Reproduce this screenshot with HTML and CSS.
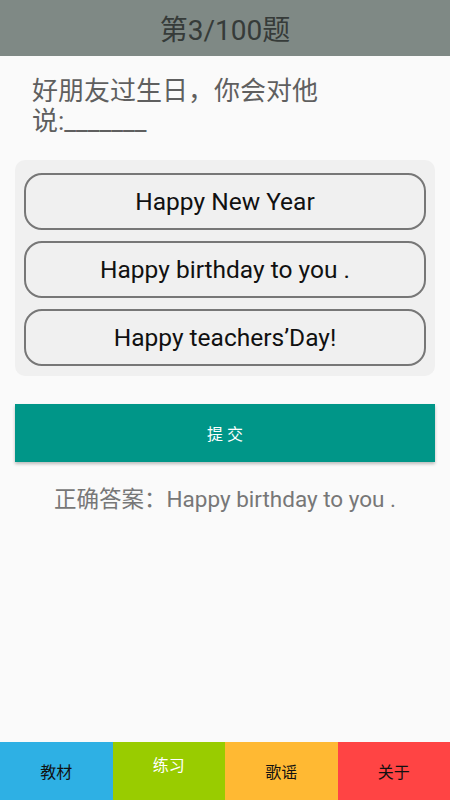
FILE: index.html
```html
<!DOCTYPE html>
<html lang="zh">
<head>
<meta charset="utf-8">
<link rel="stylesheet" href="styles.css">
</head>
<body>
<div class="app">
  <header class="topbar">第3/100题</header>
  <main class="content">
    <p class="question">好朋友过生日，你会对他说:_______</p>
    <div class="options">
      <div class="option">Happy New Year</div>
      <div class="option">Happy birthday to you .</div>
      <div class="option">Happy teachers’Day!</div>
    </div>
    <div class="submit">提 交</div>
    <p class="answer">正确答案：Happy birthday to you .</p>
  </main>
  <nav class="tabs">
    <div class="tab tab-blue">教材</div>
    <div class="tab tab-green">练习</div>
    <div class="tab tab-orange">歌谣</div>
    <div class="tab tab-red">关于</div>
  </nav>
</div>
</body>
</html>
```
FILE: styles.css
```css
html, body {
  margin: 0;
  padding: 0;
  background: #fafafa;
}
body {
  font-family: Roboto, "Noto Sans CJK SC", sans-serif;
}
.app {
  width: 450px;
  height: 800px;
  display: flex;
  flex-direction: column;
}
.topbar {
  height: 56px;
  background: #7f8985;
  color: #363b39;
  font-size: 28px;
  display: flex;
  align-items: center;
  justify-content: center;
}
.content {
  flex: 1;
  display: flex;
  flex-direction: column;
}
.question {
  margin: 20px 0 0 32px;
  width: 300px;
  font-size: 26px;
  line-height: 30px;
  color: #5f5f5f;
}
.options {
  margin: 24px 15px 0 15px;
  background: #f0f0f0;
  border-radius: 10px;
  padding: 13px 9px 10px 9px;
  display: flex;
  flex-direction: column;
  gap: 11px;
}
.option {
  height: 53px;
  border: 2px solid #777;
  border-radius: 18px;
  display: flex;
  align-items: center;
  justify-content: center;
  font-size: 24.5px;
  color: #111;
}
.submit {
  margin: 28px 15px 0 15px;
  height: 58px;
  background: #009688;
  color: #fff;
  font-size: 16px;
  display: flex;
  align-items: center;
  justify-content: center;
  box-shadow: 0 2px 3px rgba(0,0,0,0.25);
}
.answer {
  margin: 19px 0 0 0;
  text-align: center;
  font-size: 22.5px;
  color: #777;
}
.tabs {
  height: 58px;
  display: grid;
  grid-template-columns: repeat(4, 1fr);
}
.tab {
  display: flex;
  align-items: center;
  justify-content: center;
  font-size: 16px;
  color: #111;
}
.tab-blue { background: #2eb0e4; }
.tab-green { background: #99cc00; color: #fff; align-items: flex-start; padding-top: 10px; }
.tab-orange { background: #ffb933; }
.tab-red { background: #ff4444; }
```
